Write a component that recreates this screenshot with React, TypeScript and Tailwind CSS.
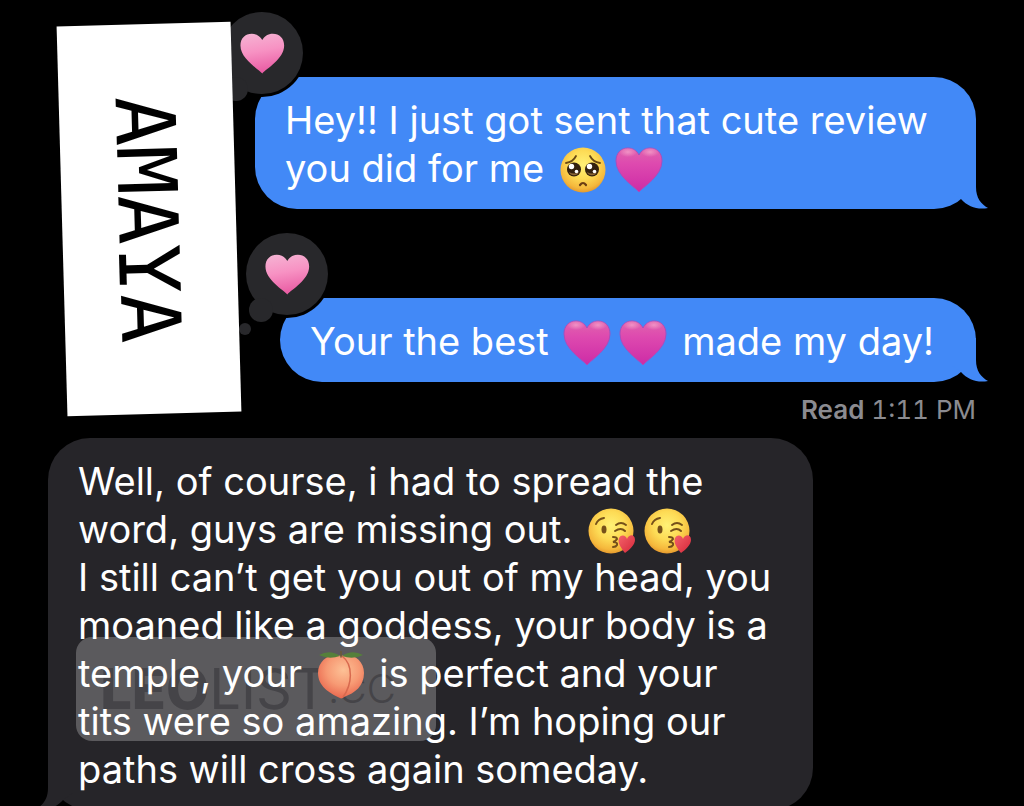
import type { ReactNode } from "react";
import { clsx } from "clsx";

const emojiClass = "mx-1 -my-2 inline-block size-12 align-[-4px]";

const heartPath =
  "M24 46 C20 41 1 30 1 15 C1 7 6 2 13 2 C18 2 22 5 24 9 C26 5 30 2 35 2 C42 2 47 7 47 15 C47 30 28 41 24 46 Z";

function HeartEmoji() {
  return (
    <svg viewBox="0 0 48 48" className={emojiClass} role="img" aria-label="pink heart">
      <defs>
        <linearGradient id="heart-fill" x1="0" y1="0" x2="0" y2="1">
          <stop offset="0" stopColor="#e065ad" />
          <stop offset="0.35" stopColor="#de4aaf" />
          <stop offset="1" stopColor="#cd2ba6" />
        </linearGradient>
        <radialGradient id="heart-shine" cx="0.5" cy="0.4" r="0.5">
          <stop offset="0" stopColor="#f49bc9" stopOpacity="0.85" />
          <stop offset="1" stopColor="#f49bc9" stopOpacity="0" />
        </radialGradient>
      </defs>
      <path d={heartPath} fill="url(#heart-fill)" stroke="#a64fbd" strokeWidth="1" />
      <ellipse cx="13" cy="7" rx="9" ry="5" fill="url(#heart-shine)" />
      <ellipse cx="35" cy="7" rx="9" ry="5" fill="url(#heart-shine)" />
    </svg>
  );
}

function FaceGradient({ id }: { id: string }) {
  return (
    <radialGradient id={id} cx="0.5" cy="0.38" r="0.62">
      <stop offset="0" stopColor="#fff176" />
      <stop offset="0.5" stopColor="#fddb55" />
      <stop offset="0.85" stopColor="#f5b83c" />
      <stop offset="1" stopColor="#e59a2e" />
    </radialGradient>
  );
}

function PleadingEmoji() {
  return (
    <svg viewBox="0 0 48 48" className={emojiClass} role="img" aria-label="pleading face">
      <defs>
        <FaceGradient id="face-pleading" />
      </defs>
      <circle cx="24" cy="24" r="22.5" fill="url(#face-pleading)" />
      <path d="M7 17 Q14 16 17 10 M31 10 Q34 16 41 17" fill="none" stroke="#6b4a14" strokeWidth="1.8" strokeLinecap="round" />
      {[15, 33].map((cx) => (
        <g key={cx}>
          <circle cx={cx} cy="23.5" r="7" fill="#33210f" />
          <path d={`M${cx - 5} 26 a5.5 5.5 0 0 0 10 0 q-5 3 -10 0Z`} fill="#8b6638" />
          <circle cx={cx - 2.5} cy="20.5" r="2.7" fill="#fff" />
          <circle cx={cx + 2.5} cy="25.5" r="1.8" fill="#fff" />
        </g>
      ))}
      <path d="M21 39 Q24 35 27 39" fill="none" stroke="#6b3d14" strokeWidth="2.2" strokeLinecap="round" />
    </svg>
  );
}

function KissEmoji() {
  return (
    <svg viewBox="0 0 48 48" className={emojiClass} role="img" aria-label="face blowing a kiss">
      <defs>
        <FaceGradient id="face-kiss" />
        <linearGradient id="kiss-heart" x1="0" y1="0" x2="1" y2="1">
          <stop offset="0" stopColor="#f4626a" />
          <stop offset="1" stopColor="#d42638" />
        </linearGradient>
      </defs>
      <circle cx="24" cy="24" r="22.5" fill="url(#face-kiss)" />
      <g fill="none" stroke="#75501a" strokeWidth="2" strokeLinecap="round">
        <path d="M9 17 Q11 12 17 11" />
        <path d="M29 18 Q34 14 39 18" />
        <path d="M28 24 Q34 20 38 24" />
        <path d="M26 30 Q30 30 30 32 Q29 34 26 35 Q31 35 30 38 Q29 40 26 40" />
      </g>
      <ellipse cx="17" cy="22.5" rx="2.5" ry="4" fill="#75501a" />
      <path
        d="M38 46 C35 42 30 36 32 31 C34 27 39 28 40 32 C42 27 48 27 48 33 C48 38 42 43 38 46 Z"
        fill="url(#kiss-heart)"
      />
    </svg>
  );
}

function PeachEmoji() {
  return (
    <svg viewBox="0 0 48 48" className={emojiClass} role="img" aria-label="peach">
      <defs>
        <radialGradient id="peach-fill" cx="0.55" cy="0.35" r="0.65">
          <stop offset="0" stopColor="#fdc196" />
          <stop offset="0.55" stopColor="#f79a74" />
          <stop offset="1" stopColor="#e9684f" />
        </radialGradient>
      </defs>
      <path
        d="M24 5 C15 1 1 8 1 22 C1 35 12 42 23 47 C24 48 26 47 27 46 C38 42 47 35 47 22 C47 8 34 1 24 5Z"
        fill="url(#peach-fill)"
      />
      <path d="M25 5 C37 14 35 34 26 46" fill="none" stroke="#d8694e" strokeWidth="1.5" />
      <path d="M2 4 Q13 -2 23 5 Q12 9 2 4Z" fill="#55803b" />
      <path d="M46 4 Q35 -2 25 5 Q36 9 46 4Z" fill="#55803b" />
      <path d="M24 6 V0" stroke="#6d5a34" strokeWidth="1.5" strokeLinecap="round" />
    </svg>
  );
}

function Reaction() {
  return (
    <svg
      viewBox="0 0 100 110"
      className="absolute -top-17 -left-11 h-[110px] w-[100px]"
      role="img"
      aria-label="Loved"
    >
      <defs>
        <linearGradient id="reaction-heart" x1="0" y1="0" x2="0.2" y2="1">
          <stop offset="0" stopColor="#f5b5d4" />
          <stop offset="0.5" stopColor="#f792c3" />
          <stop offset="1" stopColor="#ea5fa5" />
        </linearGradient>
      </defs>
      <circle cx="51" cy="44" r="44" fill="#000" />
      <g fill="#28282b">
        <circle cx="51" cy="44" r="41" />
        <circle cx="25" cy="80" r="12" />
        <circle cx="9" cy="99" r="6" />
      </g>
      <path
        transform="translate(28.5 23) scale(0.95 0.9)"
        d={heartPath}
        fill="url(#reaction-heart)"
      />
    </svg>
  );
}

function Tail({ incoming = false }: { incoming?: boolean }) {
  return (
    <svg
      viewBox="0 0 48 48"
      className={clsx(
        "absolute bottom-0 size-12",
        incoming ? "-left-3 -scale-x-100 text-[#262529]" : "-right-3 text-[#4289f7]",
      )}
      aria-hidden="true"
    >
      <path d="M10 4 H36 V26 C36 37 41 43 48 47 C38 49 28 46 21 38 L10 30 Z" fill="currentColor" />
    </svg>
  );
}

interface BubbleProps {
  className: string;
  incoming?: boolean;
  loved?: boolean;
  children: ReactNode;
}

function Bubble({ className, incoming, loved, children }: BubbleProps) {
  return (
    <div
      className={clsx(
        "relative isolate max-w-full rounded-[42px] pt-[19px] pb-[17px] pl-[30px] text-[38px] leading-[48px] whitespace-nowrap text-white",
        incoming ? "self-start bg-[#262529]" : "self-end bg-[#4289f7]",
        className,
      )}
    >
      <Tail incoming={incoming} />
      {loved && <Reaction />}
      <p className="relative">{children}</p>
    </div>
  );
}

function NameCard() {
  return (
    <div className="absolute top-6 left-[62px] z-10 flex h-[390px] w-[174px] rotate-[-1.6deg] items-center justify-center bg-white pr-1">
      <span className="relative font-['DejaVu_Sans_Mono',monospace] text-[82px] leading-none text-black [writing-mode:vertical-rl]">
        AMAYA
        <span className="absolute top-[158px] left-[12px] h-[30px] w-[7px] bg-black" />
      </span>
    </div>
  );
}

function Watermark() {
  return (
    <span className="absolute top-[180px] -left-0.5 -z-10 flex h-[104px] w-[360px] items-center justify-center rounded-2xl bg-[#5b5a5d] pr-4 text-[56px] text-[#454448]">
      <span className="font-extrabold">LEO</span>
      <span className="font-normal">LIST</span>
      <span className="text-[40px] font-light">.CC</span>
    </span>
  );
}

export default function App() {
  return (
    <main className="relative flex h-screen flex-col overflow-hidden bg-black px-12 pt-[77px] font-[Inter,sans-serif]">
      <NameCard />

      <Bubble className="w-[721px]" loved>
        Hey!! I just got sent that cute review
        <br />
        you did for me <PleadingEmoji />
        <HeartEmoji />
      </Bubble>

      <div className="mt-[89px] flex flex-col">
        <Bubble className="w-[696px]" loved>
          Your the best <HeartEmoji />
          <HeartEmoji /> made my day!
        </Bubble>
      </div>

      <p className="my-3 self-end text-[26px] leading-8 text-[#8b8b90] tabular-nums">
        <span className="font-semibold">Read</span> 1:11 PM
      </p>

      <Bubble className="w-[765px]" incoming>
        <Watermark />
        Well, of course, i had to spread the
        <br />
        word, guys are missing out. <KissEmoji />
        <KissEmoji />
        <br />
        I still can’t get you out of my head, you
        <br />
        moaned like a goddess, your body is a
        <br />
        temple, your <PeachEmoji /> is perfect and your
        <br />
        tits were so amazing. I’m hoping our
        <br />
        paths will cross again someday.
      </Bubble>
    </main>
  );
}
